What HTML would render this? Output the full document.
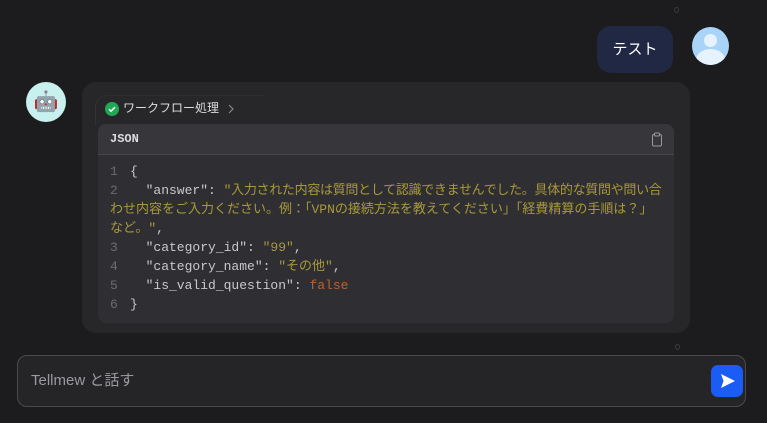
<!DOCTYPE html>
<html><head><meta charset="utf-8"><style>
*{margin:0;padding:0;box-sizing:border-box}
body{width:767px;height:423px;background:#1c1c1e;position:relative;overflow:hidden;font-family:"Liberation Sans","Noto Sans CJK JP",sans-serif;color:#e5e5e5}
.a{position:absolute}
.mono{font-family:"Liberation Mono","Noto Sans CJK JP",monospace}
.code div{height:19px;line-height:19px;white-space:pre}
.n{color:#6b6b70;display:inline-block;width:20px}
.s{color:#a8993a}
.k{color:#c8c8cc}
.f{color:#c0612c}
</style></head><body>
<div class="a" style="left:674px;top:7px;width:5px;height:6px;border:1px solid #3a3a3e;border-radius:50%"></div>
<div class="a" style="left:597px;top:26px;width:76px;height:47px;background:#202844;border-radius:14px;color:#fff;font-size:15px;line-height:47px;text-align:center">テスト</div>
<div class="a" style="left:692px;top:27px;width:37px;height:38px;border-radius:50%;background:#a9d4f8;overflow:hidden">
<div class="a" style="left:12px;top:7px;width:13px;height:13px;border-radius:50%;background:#e6f3ff"></div>
<div class="a" style="left:4px;top:22px;width:29px;height:22px;border-radius:50%;background:#e6f3ff"></div></div>
<div class="a" style="left:26px;top:82px;width:40px;height:40px;border-radius:50%;background:#c8f0ef;text-align:center;line-height:40px;font-size:20px">🤖</div>
<div class="a" style="left:82px;top:82px;width:608px;height:251px;background:#27272a;border-radius:14px"></div>
<div class="a" style="left:95px;top:95px;width:170px;height:30px;border-left:1px solid #333;border-top:1px solid #2e2e31;border-radius:12px 0 0 0"></div>
<div class="a" style="left:105px;top:102px;width:14px;height:14px;border-radius:50%;background:#1fa855"><svg width="14" height="14" viewBox="0 0 14 14" style="display:block"><path d="M4 7.2l2 2 4-4" stroke="#fff" stroke-width="1.5" fill="none"/></svg></div>
<div class="a" style="left:123px;top:100px;font-size:12px;color:#ddd;line-height:16px">ワークフロー処理</div>
<svg class="a" style="left:227px;top:103px" width="8" height="12" viewBox="0 0 8 12"><path d="M2 2l4 4-4 4" stroke="#888" stroke-width="1.2" fill="none"/></svg>
<div class="a" style="left:98px;top:124px;width:576px;height:199px;background:#2f2f33;border-radius:8px;overflow:hidden">
<div style="height:31px;background:#37373b;border-bottom:1px solid #46464a;position:relative">
<div class="a mono" style="left:12px;top:8px;font-size:12px;font-weight:bold;color:#ddd">JSON</div>
<svg class="a" style="left:553px;top:8px" width="12" height="15" viewBox="0 0 12 15"><rect x="1.5" y="2.5" width="9" height="11.5" rx="1.5" stroke="#999" fill="none"/><rect x="3.5" y="1" width="5" height="3" rx="1" stroke="#999" fill="#37373b"/></svg>
</div>
<div class="code mono" style="position:absolute;left:12px;top:38px;font-size:13px;color:#c8c8cc">
<div><span class="n">1</span>{</div>
<div><span class="n">2</span>  "answer": <span class="s" style="letter-spacing:-0.3px">"入力された内容は質問として認識できませんでした。具体的な質問や問い合</span></div>
<div class="s">わせ内容をご入力ください。例：「VPNの接続方法を教えてください」「経費精算の手順は？」</div>
<div><span class="s">など。"</span>,</div>
<div><span class="n">3</span>  "category_id": <span class="s">"99"</span>,</div>
<div><span class="n">4</span>  "category_name": <span class="s">"その他"</span>,</div>
<div><span class="n">5</span>  "is_valid_question": <span class="f">false</span></div>
<div><span class="n">6</span>}</div>
</div></div>
<div class="a" style="left:675px;top:344px;width:5px;height:6px;border:1px solid #3a3a3e;border-radius:50%"></div>
<div class="a" style="left:17px;top:355px;width:729px;height:52px;background:#252527;border:1px solid #4a4a4e;border-radius:10px"></div>
<div class="a" style="left:31px;top:372px;font-size:15px;color:#9a9aa0;line-height:18px">Tellmew と話す</div>
<div class="a" style="left:711px;top:365px;width:32px;height:32px;background:#1b5cf5;border-radius:7px">
<svg width="32" height="32" viewBox="0 0 32 32"><path d="M10 9l14 7-14 7 2.5-7z" fill="#fff"/></svg></div>
</body></html>
